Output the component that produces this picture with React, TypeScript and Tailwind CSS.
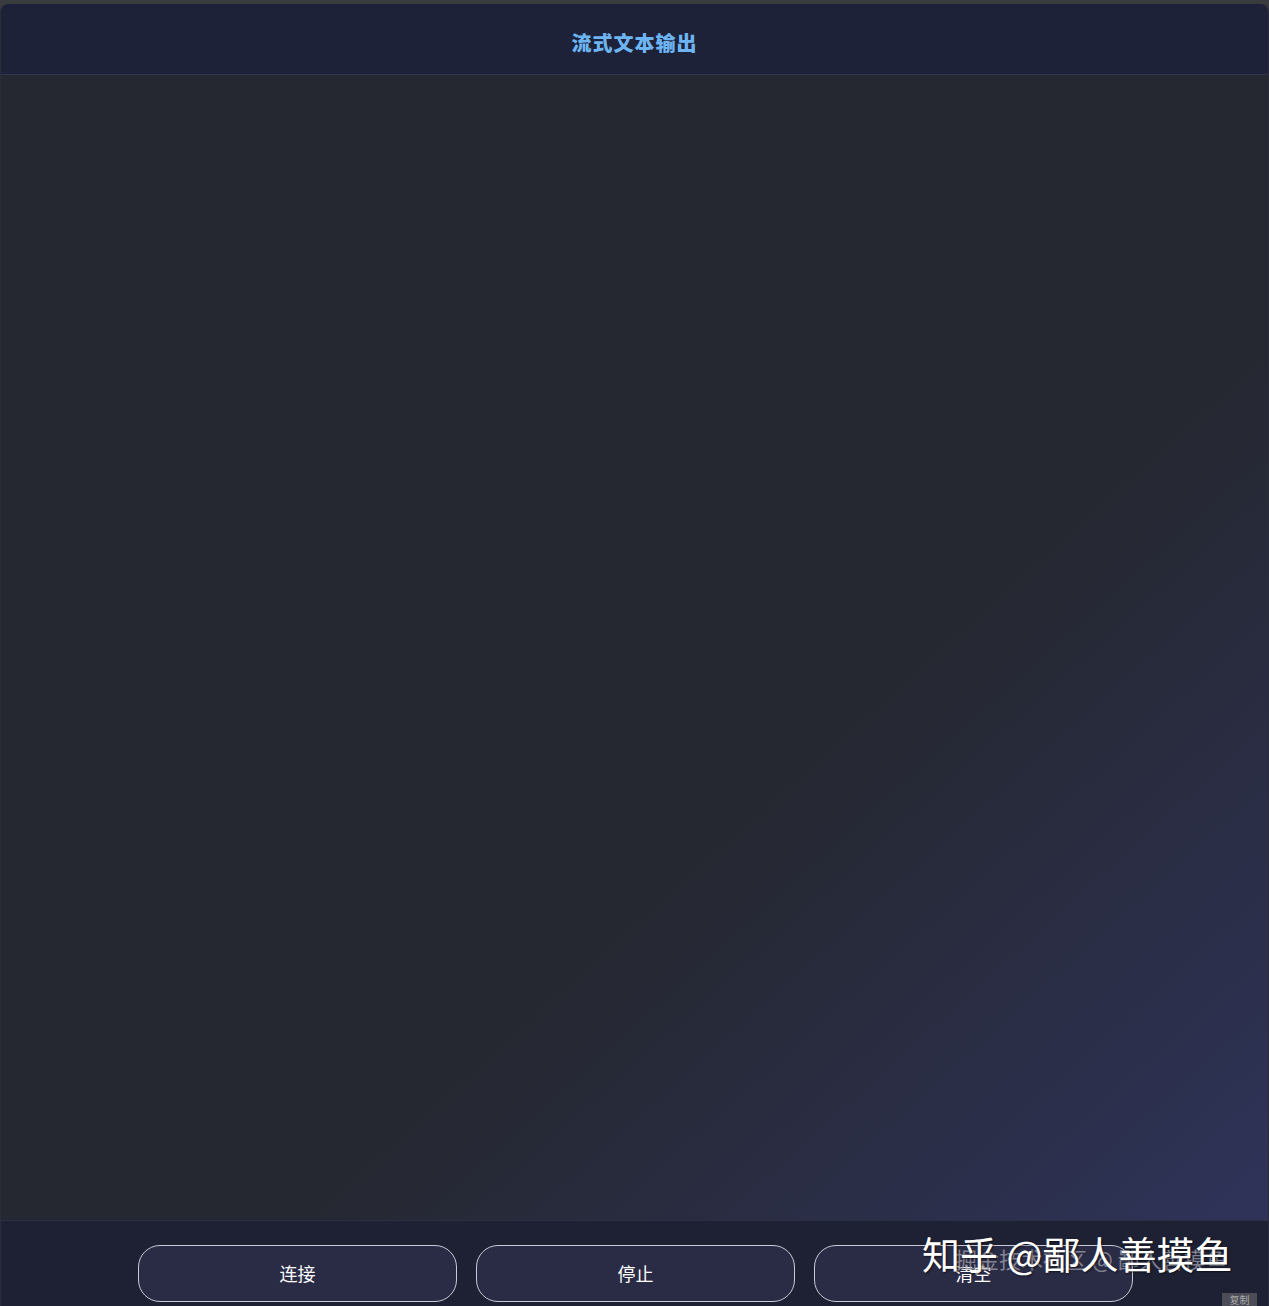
import React from "react";

export default function App() {
  const buttons = ["连接", "停止", "清空"];
  return (
    <div
      className="relative flex h-[1306px] w-full flex-col overflow-hidden bg-[#3a3b3f] pt-[4px]"
      style={{ fontFamily: '"Noto Sans CJK SC", "Noto Sans", sans-serif' }}
    >
      <div className="flex flex-1 flex-col overflow-hidden rounded-t-[8px] border-x border-[#2a2c3a]">
        <header className="flex h-[71px] shrink-0 items-center justify-center border-b border-[#30344f] bg-[#1e2238] pt-[8px]">
          <h1 className="text-[20px] font-black tracking-[1px] text-[#6db5f2]">流式文本输出</h1>
        </header>
        <main className="flex-1 bg-[linear-gradient(to_bottom_right,#252831_0%,#252831_62%,#2f3359_100%)]" />
        <footer className="flex h-[86px] shrink-0 justify-center gap-[19px] border-t border-[#2c2f48] bg-[#1e2134] pl-[2px] pt-[24px]">
          {buttons.map((b) => (
            <button
              key={b}
              className="h-[57px] w-[319px] rounded-[22px] border border-[#c9cad6] bg-[#2a2b45] text-[18px] text-white"
            >
              {b}
            </button>
          ))}
        </footer>
      </div>

      <div className="pointer-events-none absolute left-[955px] top-[1242px] whitespace-nowrap text-[22px] text-[#9a9aa6] opacity-80">
        掘金技术社区 @ 鄙人善摸鱼
      </div>
      <div className="pointer-events-none absolute left-[922px] top-[1227px] whitespace-nowrap text-[38px] leading-[52px] text-white [text-shadow:1px_1px_2px_rgba(0,0,0,0.6)]">
        知乎 @鄙人善摸鱼
      </div>
      <div className="absolute left-[1222px] top-[1293px] flex h-[16px] w-[35px] items-start justify-center bg-[#4b4c55] text-[10px] leading-[14px] text-[#aaa]">
        复制
      </div>
    </div>
  );
}
